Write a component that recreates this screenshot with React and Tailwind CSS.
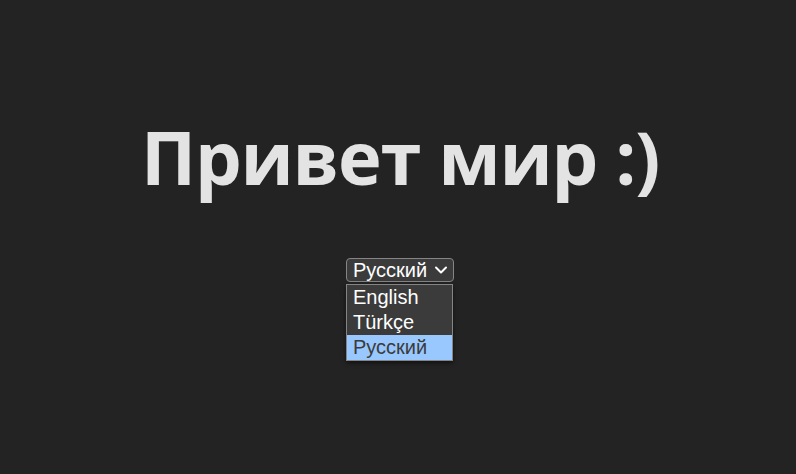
import { ChevronDown } from 'lucide-react'

const options = ['English', 'Türkçe', 'Русский']

export default function App() {
  const selected = 'Русский'

  return (
    <div className="min-h-screen bg-[#232323] flex flex-col items-center pt-[120px] pl-[4px]">
      <h1 className="text-[74px] leading-[74px] font-bold tracking-[-1.2px] text-[#e3e3e3] font-['Open_Sans',sans-serif]">
        Привет мир :)
      </h1>

      {/* language picker, shown open */}
      <div className="relative mt-[64px] w-[108px] font-['Liberation_Sans',Arial,sans-serif] text-[20px]">
        <div className="flex items-center justify-between h-[24px] pl-[6px] pr-[2px] bg-[#3b3b3b] border border-[#858585] rounded-[4px] text-white leading-none">
          <span>{selected}</span>
          <ChevronDown size={20} strokeWidth={2.4} />
        </div>
        <ul className="absolute left-0 top-[26px] w-[107px] bg-[#3b3b3b] border border-[#858585] shadow-[0_2px_4px_rgba(0,0,0,0.5)]">
          {options.map((o) => (
            <li
              key={o}
              className={
                o === selected
                  ? 'h-[25px] leading-[25px] px-[6px] bg-[#99c8ff] text-[#3b3b3b]'
                  : 'h-[25px] leading-[25px] px-[6px] text-white'
              }
            >
              {o}
            </li>
          ))}
        </ul>
      </div>
    </div>
  )
}
